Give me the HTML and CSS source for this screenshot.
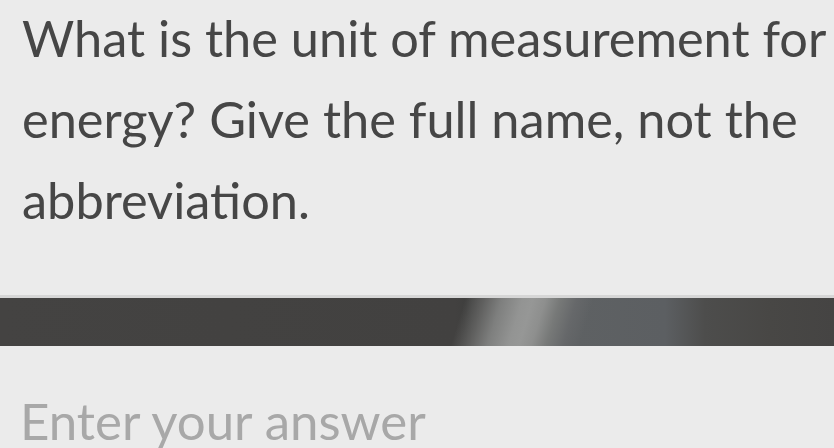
FILE: index.html
```html
<!DOCTYPE html>
<html>
<head>
<meta charset="utf-8">
<link rel="stylesheet" href="styles.css">
</head>
<body>
<div class="page">
  <div class="question">What is the unit of measurement for<br>energy? Give the full name, not the<br>abbreviation.</div>
  <div class="bar"></div>
  <div class="answer"><input class="answer-input" type="text" placeholder="Enter your answer"></div>
</div>
</body>
</html>
```
FILE: styles.css
```css
html, body {
  margin: 0;
  padding: 0;
  background: #ebebeb;
  overflow: hidden;
}
.page {
  width: 834px;
  height: 448px;
  display: flex;
  flex-direction: column;
}
.question {
  font-family: Lato, "Liberation Sans", sans-serif;
  font-weight: 400;
  font-size: 50.5px;
  line-height: 81px;
  color: #464646;
  white-space: nowrap;
  padding: 0 0 0 22px;
  margin-top: -3px;
  height: 298px;
  box-sizing: border-box;
  flex: none;
}
.bar {
  flex: none;
  height: 48px;
  border-top: 3px solid #d6d6d6;
  background:
    linear-gradient(107deg,
      rgba(67,66,65,0) 445px,
      #5e5e5d 462px,
      #7e7f7e 480px,
      #939493 500px,
      #969796 510px,
      #8e8f8e 522px,
      #777978 536px,
      #66686a 552px,
      rgba(92,95,98,0) 568px),
    linear-gradient(90deg,
      #444342 0px, #424140 455px, #3f3f3e 466px, #5e6163 575px,
      #5c5f62 665px, #4d4d4c 705px, #484745 770px, #454443 834px);
}
.answer {
  flex: none;
  padding-top: 45px;
}
.answer-input {
  display: block;
  width: 100%;
  height: 60px;
  line-height: 60px;
  border: none;
  outline: none;
  background: transparent;
  font-family: Lato, "Liberation Sans", sans-serif;
  font-weight: 400;
  font-size: 51px;
  color: #464646;
  padding: 0 0 0 20px;
  margin: 0;
  box-sizing: border-box;
}
.answer-input::placeholder {
  color: #a8a8a8;
}
```
